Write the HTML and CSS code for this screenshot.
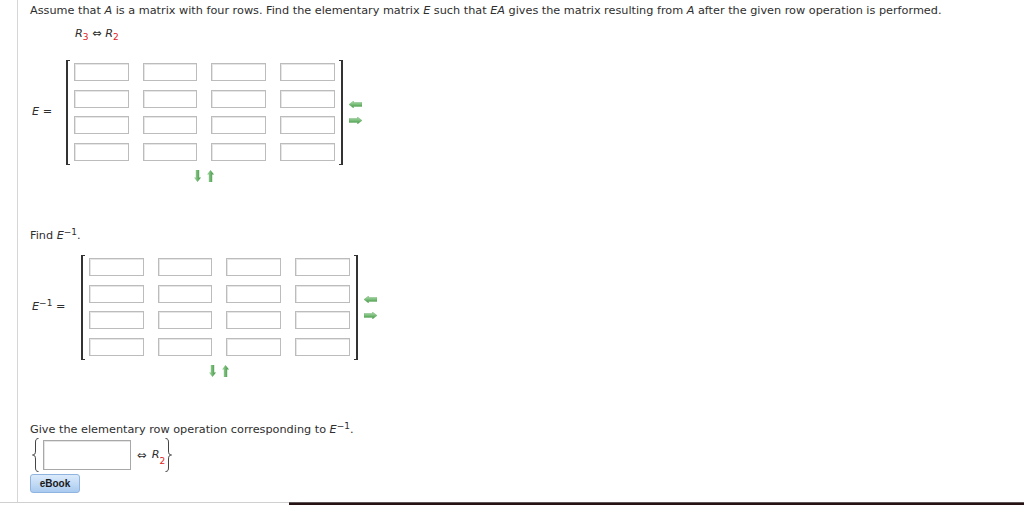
FILE: index.html
```html
<!DOCTYPE html>
<html>
<head>
<meta charset="utf-8">
<link rel="stylesheet" href="styles.css">
</head>
<body>
<div class="page">
  <main class="content">
    <p class="q">Assume that <i>A</i> is a matrix with four rows. Find the elementary matrix <i>E</i> such that <i>EA</i> gives the matrix resulting from <i>A</i> after the given row operation is performed.</p>
    <p class="op"><i>R</i><sub class="red">3</sub> ⇔ <i>R</i><sub class="red">2</sub></p>

    <div class="msec msec-1">
      <div class="mlabel mlabel-e"><i>E</i> =</div>
      <div class="matrix">
        <div class="br br-l"></div>
        <div class="cells">
          <input class="cell"><input class="cell"><input class="cell"><input class="cell">
          <input class="cell"><input class="cell"><input class="cell"><input class="cell">
          <input class="cell"><input class="cell"><input class="cell"><input class="cell">
          <input class="cell"><input class="cell"><input class="cell"><input class="cell">
        </div>
        <div class="br br-r"></div>
      </div>
      <div class="side-arrows">
        <svg width="13" height="7" viewBox="0 0 13 7"><defs><linearGradient id="gh1" x1="0" y1="0" x2="0" y2="1"><stop offset="0" stop-color="#b4e2b4"/><stop offset="1" stop-color="#3f963f"/></linearGradient></defs><polygon points="0,3.5 4.5,0 4.5,1.6 13,1.6 13,5.4 4.5,5.4 4.5,7" fill="url(#gh1)" stroke="#5aa55a" stroke-width="0.4"/></svg>
        <svg width="13" height="7" viewBox="0 0 13 7"><polygon points="13,3.5 8.5,0 8.5,1.6 0,1.6 0,5.4 8.5,5.4 8.5,7" fill="url(#gh1)" stroke="#5aa55a" stroke-width="0.4"/></svg>
      </div>
      <div class="vert-arrows">
        <svg width="7" height="12" viewBox="0 0 7 12"><defs><linearGradient id="gv1" x1="0" y1="0" x2="1" y2="0"><stop offset="0" stop-color="#a6dba6"/><stop offset="1" stop-color="#3a8f3a"/></linearGradient></defs><polygon points="3.5,12 0,7.5 1.8,7.5 1.8,0 5.2,0 5.2,7.5 7,7.5" fill="url(#gv1)"/></svg>
        <svg width="7" height="12" viewBox="0 0 7 12"><polygon points="3.5,0 0,4.5 1.8,4.5 1.8,12 5.2,12 5.2,4.5 7,4.5" fill="url(#gv1)"/></svg>
      </div>
    </div>

    <p class="find">Find <i>E</i><sup>−1</sup>.</p>

    <div class="msec msec-2">
      <div class="mlabel mlabel-einv"><i>E</i><sup>−1</sup> =</div>
      <div class="matrix">
        <div class="br br-l"></div>
        <div class="cells">
          <input class="cell"><input class="cell"><input class="cell"><input class="cell">
          <input class="cell"><input class="cell"><input class="cell"><input class="cell">
          <input class="cell"><input class="cell"><input class="cell"><input class="cell">
          <input class="cell"><input class="cell"><input class="cell"><input class="cell">
        </div>
        <div class="br br-r"></div>
      </div>
      <div class="side-arrows">
        <svg width="13" height="7" viewBox="0 0 13 7"><polygon points="0,3.5 4.5,0 4.5,1.6 13,1.6 13,5.4 4.5,5.4 4.5,7" fill="url(#gh1)" stroke="#5aa55a" stroke-width="0.4"/></svg>
        <svg width="13" height="7" viewBox="0 0 13 7"><polygon points="13,3.5 8.5,0 8.5,1.6 0,1.6 0,5.4 8.5,5.4 8.5,7" fill="url(#gh1)" stroke="#5aa55a" stroke-width="0.4"/></svg>
      </div>
      <div class="vert-arrows">
        <svg width="7" height="12" viewBox="0 0 7 12"><polygon points="3.5,12 0,7.5 1.8,7.5 1.8,0 5.2,0 5.2,7.5 7,7.5" fill="url(#gv1)"/></svg>
        <svg width="7" height="12" viewBox="0 0 7 12"><polygon points="3.5,0 0,4.5 1.8,4.5 1.8,12 5.2,12 5.2,4.5 7,4.5" fill="url(#gv1)"/></svg>
      </div>
    </div>

    <p class="give">Give the elementary row operation corresponding to <i>E</i><sup>−1</sup>.</p>

    <div class="oprow">
      <svg class="brace" width="7" height="34" viewBox="0 0 7 34"><path d="M6.5,0.5 C3.8,0.5 3.5,2 3.5,5 L3.5,13 C3.5,15.8 2.6,17 0.5,17 C2.6,17 3.5,18.2 3.5,21 L3.5,29 C3.5,32 3.8,33.5 6.5,33.5" fill="none" stroke="#444" stroke-width="1"/></svg>
      <input class="opcell">
      <span class="opsym">⇔</span>
      <span class="opr"><i>R</i><sub class="red low">2</sub></span>
      <svg class="brace" width="7" height="34" viewBox="0 0 7 34"><path d="M0.5,0.5 C3.2,0.5 3.5,2 3.5,5 L3.5,13 C3.5,15.8 4.4,17 6.5,17 C4.4,17 3.5,18.2 3.5,21 L3.5,29 C3.5,32 3.2,33.5 0.5,33.5" fill="none" stroke="#444" stroke-width="1"/></svg>
    </div>

    <button class="ebook">eBook</button>
  </main>
  <footer class="footer">
    <div class="footer-l"></div>
    <div class="footer-r"></div>
  </footer>
</div>
</body>
</html>
```

FILE: styles.css
```css
html, body {
  margin: 0;
  padding: 0;
  background: #fff;
}
body {
  font-family: "DejaVu Sans", Verdana, sans-serif;
  font-size: 11.25px;
  line-height: 14px;
  color: #2e2e2e;
}
.page {
  display: flex;
  flex-direction: column;
  height: 505px;
  overflow: hidden;
}
.content {
  flex: 1;
  margin-left: 17px;
  border-left: 1px solid #d6d6d6;
  padding-left: 12px;
  padding-top: 4px;
}
p {
  margin: 0;
}
i {
  font-style: oblique;
}
sub, sup {
  font-size: 0.8em;
  line-height: 0;
}
sub {
  vertical-align: -0.35em;
}
sup {
  vertical-align: 0.5em;
}
.red {
  color: #e02020;
}
.op {
  margin-top: 9px;
  padding-left: 45px;
}
.msec {
  display: grid;
  grid-template-columns: auto auto auto;
  justify-content: start;
  align-items: center;
}
.msec-1 {
  margin-top: 19px;
}
.msec-2 {
  margin-top: 12px;
}
.mlabel {
  box-sizing: border-box;
  padding-left: 2px;
}
.mlabel-e {
  width: 36px;
}
.mlabel-einv {
  width: 51px;
}
.matrix {
  display: flex;
}
.br {
  width: 2px;
  border-top: 1px solid #333;
  border-bottom: 1px solid #333;
}
.br-l {
  border-left: 2px solid #333;
}
.br-r {
  border-right: 2px solid #333;
}
.cells {
  display: grid;
  grid-template-columns: repeat(4, 54.7px);
  column-gap: 14px;
  row-gap: 8.67px;
  padding: 3px 4px 4px 4px;
}
.cell {
  box-sizing: border-box;
  width: 54.7px;
  height: 18px;
  margin: 0;
  padding: 0;
  border: 1px solid #bcbcbc;
  box-shadow: inset 1px 1px 0 #e6e6e6;
  background: #fff;
  display: block;
}
.side-arrows {
  display: flex;
  flex-direction: column;
  gap: 9px;
  margin-left: 6px;
  margin-top: 0;
}
.side-arrows svg, .vert-arrows svg {
  display: block;
}
.vert-arrows {
  grid-column: 2;
  justify-self: center;
  display: flex;
  gap: 6px;
  margin-top: 5px;
}
.find {
  margin-top: 47px;
}
.give {
  margin-top: 46px;
}
.oprow {
  display: flex;
  align-items: center;
  margin-top: 1px;
  padding-left: 2px;
  height: 34px;
}
.brace {
  display: block;
}
.opcell {
  box-sizing: border-box;
  width: 88px;
  height: 30px;
  margin: 0 0 0 4px;
  padding: 0;
  border: 1px solid #a8a8a8;
  box-shadow: inset 1px 1px 0 #e4e4e4;
  background: #fff;
  display: block;
}
.opsym {
  margin-left: 6px;
  font-size: 11.5px;
}
.opr {
  margin-left: 5px;
}
.low {
  vertical-align: -0.7em;
}
.ebook {
  display: block;
  box-sizing: border-box;
  margin-top: 2px;
  width: 50px;
  height: 19px;
  padding: 0;
  border: 1px solid #8eb4df;
  border-radius: 3px;
  background: linear-gradient(#dcebfb, #a9caef);
  font-family: "Liberation Sans", Arial, sans-serif;
  font-weight: bold;
  font-size: 10px;
  color: #1a1a1a;
}
.footer {
  display: flex;
  height: 3px;
}
.footer-l {
  width: 289px;
  border-top: 1px solid #d0d0d0;
}
.footer-r {
  flex: 1;
  background: #261212;
  border-top: 1px solid #5e5656;
}
```
